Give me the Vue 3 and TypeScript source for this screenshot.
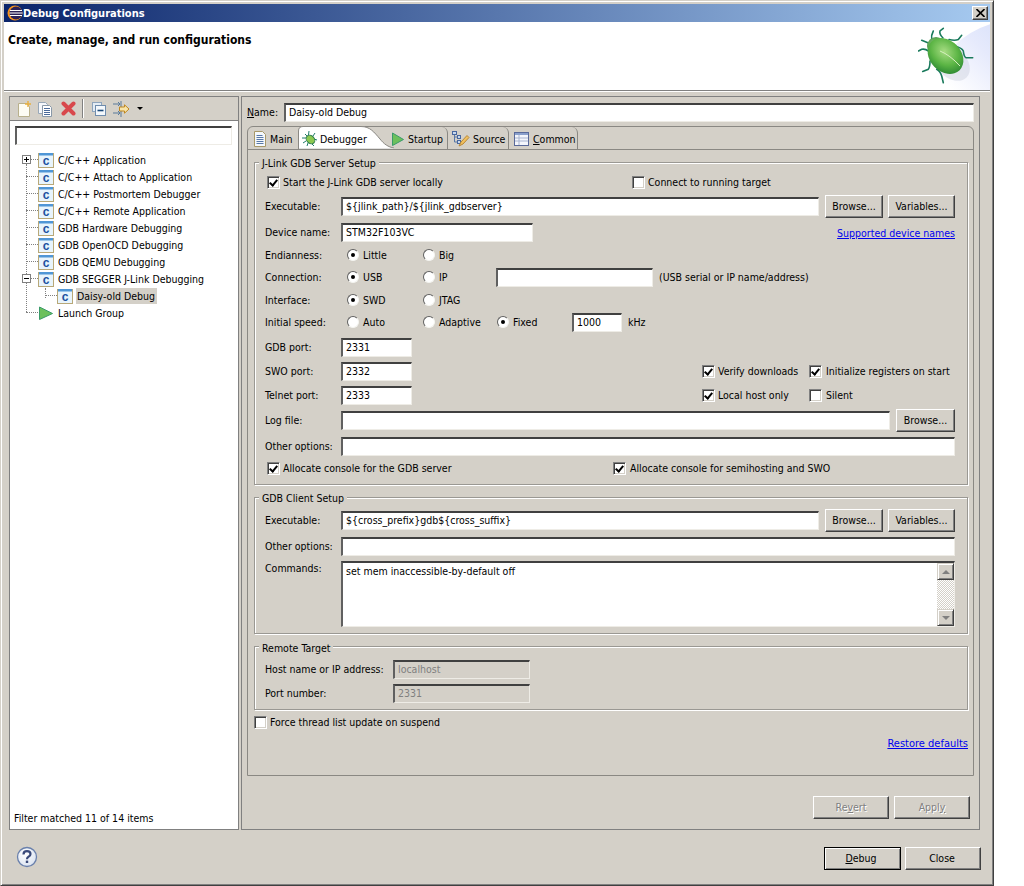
<script setup lang="ts">
interface TreeItem { label: string; child?: boolean; expander?: '+' | '-'; selected?: boolean; launch?: boolean }
const tree: TreeItem[] = [
  { label: 'C/C++ Application', expander: '+' },
  { label: 'C/C++ Attach to Application' },
  { label: 'C/C++ Postmortem Debugger' },
  { label: 'C/C++ Remote Application' },
  { label: 'GDB Hardware Debugging' },
  { label: 'GDB OpenOCD Debugging' },
  { label: 'GDB QEMU Debugging' },
  { label: 'GDB SEGGER J-Link Debugging', expander: '-' },
  { label: 'Daisy-old Debug', child: true, selected: true },
  { label: 'Launch Group', launch: true },
]
const legs = [
  'M13.7 16 Q13 11 15.3 7',
  'M25 14 Q21 10 22 7 L25.3 4.3',
  'M31 15.5 Q37 17 40.3 15.5 L43.7 11.3',
  'M10.5 19 L3.7 16.3',
  'M10.5 27 Q7 24.5 3.7 25.3 L0.5 27',
  'M12 37 Q12 43 10.3 45.3 L4.7 47.5',
  'M18.7 45.3 Q22 47 23.7 52 L25.3 58.7',
  'M37 22 Q44 24 45.3 27 Q46 33 48 33.7 L54.7 33.7',
]
</script>

<template>
  <div class="window">
    <div class="titlebar">
      <svg class="eclipse" width="16" height="16" viewBox="0 0 16 16">
        <circle cx="8" cy="8" r="7.5" fill="#f7941e" />
        <circle cx="9" cy="8" r="6.5" fill="#2c2255" />
        <path d="M3 5.5h12M2.5 8h13M3 10.5h12" stroke="#fff" stroke-width="1.2" />
      </svg>
      <span class="title-text">Debug Configurations</span>
      <button class="close-x" aria-label="Close">
        <svg width="9" height="8" viewBox="0 0 9 8"><path d="M0.5 0L8.5 8M8.5 0L0.5 8" stroke="#000" stroke-width="1.6" /></svg>
      </button>
    </div>

    <div class="header">
      <span class="header-title">Create, manage, and run configurations</span>
      <svg class="bug" width="72" height="66" viewBox="0 0 72 66">
        <defs>
          <linearGradient id="corner" x1="0" y1="1" x2="1" y2="0">
            <stop offset="0.2" stop-color="#ffffff" />
            <stop offset="0.75" stop-color="#e6eafc" />
            <stop offset="1" stop-color="#dde4fb" />
          </linearGradient>
          <radialGradient id="shell" cx="0.4" cy="0.42" r="0.7">
            <stop offset="0" stop-color="#a6dc82" />
            <stop offset="0.55" stop-color="#5cb545" />
            <stop offset="1" stop-color="#23802f" />
          </radialGradient>
          <radialGradient id="head" cx="0.4" cy="0.4" r="0.7">
            <stop offset="0" stop-color="#8ccb70" />
            <stop offset="1" stop-color="#2a7a3a" />
          </radialGradient>
        </defs>
        <path d="M72 0.3 Q28.7 13.7 8.7 66 H72 Z" fill="url(#corner)" />
        <ellipse cx="33" cy="38" rx="22" ry="15" fill="#c9cfdd" opacity="0.45" transform="rotate(45 33 38)" />
        <g fill="none" stroke="#1a7a5c" stroke-width="1.6" stroke-linecap="round">
          <path v-for="(d, i) in legs" :key="i" :d="d" />
        </g>
        <circle cx="18" cy="22" r="9" fill="url(#head)" />
        <ellipse cx="27.5" cy="32" rx="20" ry="15.5" fill="url(#shell)" transform="rotate(45 27.5 32)" />
        <path d="M22 27 Q32 31 42 42" fill="none" stroke="#d6f0c0" stroke-width="1" />
      </svg>
    </div>

    <div class="body">
      <aside class="left">
        <div class="toolbar">
          <svg width="16" height="16" viewBox="0 0 16 16" class="tb-new">
            <path d="M2.5 2.5h8l3 3v10h-11z" fill="#fdfcf4" stroke="#b8b08c" />
            <path d="M12 0v6M9 3h6" stroke="#e8b040" stroke-width="1.4" />
          </svg>
          <svg width="16" height="16" viewBox="0 0 16 16" class="tb-dup">
            <path d="M1.5 1.5h7l2 2v9h-9z" fill="#f4f6fa" stroke="#98a8b8" />
            <path d="M5.5 4.5h7l2 2v9h-9z" fill="#fff" stroke="#8898a8" />
            <path d="M7 7.5h6M7 9.5h6M7 11.5h6M7 13.5h6" stroke="#4a6a9a" />
          </svg>
          <svg width="15" height="15" viewBox="0 0 15 15" class="tb-del">
            <path d="M2.5 2.5L12.5 12.5M12.5 2.5L2.5 12.5" stroke="#d8484c" stroke-width="4" stroke-linecap="round" />
          </svg>
          <span class="tb-sep"></span>
          <svg width="14" height="14" viewBox="0 0 14 14" class="tb-collapse">
            <rect x="0.5" y="0.5" width="9" height="9" fill="#e4ecf4" stroke="#8ea4bc" />
            <rect x="3.5" y="3.5" width="10" height="10" fill="#f4f8fc" stroke="#6f8cac" />
            <path d="M5.5 8.5h6" stroke="#1c4a7a" stroke-width="1.6" />
          </svg>
          <svg width="17" height="16" viewBox="0 0 17 16" class="tb-filter">
            <path d="M0 3h6M0 12h6M8 0v16M5 1l2 2-2 2M5 10l2 2-2 2" fill="none" stroke="#5a7a9a" />
            <path d="M6.5 6h5V3.8l4.5 4.2-4.5 4.2V10h-5z" fill="#f8e4a8" stroke="#c08820" />
          </svg>
          <span class="tb-drop"></span>
        </div>
        <div class="filter-wrap"><div class="field filter-field"></div></div>
        <div class="tree">
          <span class="tree-vline"></span>
          <span class="tree-vline-child"></span>
          <div v-for="item in tree" :key="item.label" class="tree-row" :class="{ 'tree-child': item.child }">
            <span class="tree-slot">
              <span class="tree-dots"></span>
              <span v-if="item.expander" class="expander">
                <span class="exp-h"></span>
                <span v-if="item.expander === '+'" class="exp-v"></span>
              </span>
            </span>
            <svg v-if="item.launch" width="16" height="16" viewBox="0 0 16 16">
              <path d="M1.5 2L14.5 8.5L1.5 14.5Z" fill="#6cc05c" stroke="#3a9a6a" />
            </svg>
            <svg v-else width="16" height="16" viewBox="0 0 16 16">
              <rect x="0.5" y="1.5" width="15" height="14" fill="#e8f4fc" stroke="#b8a878" />
              <rect x="1" y="1" width="14" height="2.5" fill="#4f96d6" />
              <text x="8" y="12.8" class="c-glyph">c</text>
            </svg>
            <span class="tree-label" :class="{ selected: item.selected }">{{ item.label }}</span>
          </div>
        </div>
        <div class="filter-status">Filter matched 11 of 14 items</div>
      </aside>

      <main class="right">
        <div class="name-row">
          <span class="name-label"><u>N</u>ame:</span>
          <div class="field name-field">Daisy-old Debug</div>
        </div>

        <section class="folder">
          <div class="tabs">
            <div class="tab tab-main">
              <svg width="14" height="16" viewBox="0 0 14 16">
                <path d="M1.5 0.5h8l3 3v12h-11z" fill="#f4f8fc" stroke="#a89868" />
                <path d="M3.5 4.5h6M3.5 6.5h7M3.5 8.5h7M3.5 10.5h7M3.5 12.5h7" stroke="#5878a8" />
              </svg>
              <span>Main</span>
            </div>
            <div class="tab tab-debugger">
              <svg class="tab-shape" width="96" height="23" viewBox="0 0 96 23">
                <path d="M0.5 23V5Q0.5 0.5 5 0.5H63C72 0.5 76 6 82 13C86 18 90 21 96 22V23Z" fill="#fff" stroke="#8a8883" />
                <path d="M1 23H96" stroke="#fff" />
              </svg>
              <svg class="tab-icon" width="16" height="16" viewBox="0 0 16 16">
                <g stroke="#1f7a6a" stroke-width="1" fill="none">
                  <path d="M3 3L5 5M7 0L6.5 4M13 2L11 5M0 7L4 7M15 9L12 8M1 12L4 10M5 15L6 12M12 15L10 13" />
                </g>
                <ellipse cx="8.5" cy="8.5" rx="4.8" ry="3.8" fill="#8cc850" stroke="#2a7a4a" transform="rotate(45 8.5 8.5)" />
              </svg>
              <span class="tab-text">Debugger</span>
            </div>
            <div class="tab tab-startup">
              <svg class="startup-icon" width="14" height="16" viewBox="0 0 14 16">
                <path d="M1.5 2L12.5 8.5L1.5 14.5Z" fill="#6cc05c" stroke="#3a9a6a" />
              </svg>
              <span>Startup</span>
            </div>
            <div class="tab tab-source">
              <svg width="18" height="16" viewBox="0 0 18 16">
                <path d="M2.5 2v9h3M2.5 6h3" fill="none" stroke="#5878a8" />
                <rect x="0.5" y="0.5" width="4" height="3" fill="#c8d8ec" stroke="#4868a0" />
                <rect x="5.5" y="4.5" width="3" height="3" fill="#c8d8ec" stroke="#4868a0" />
                <rect x="5.5" y="9.5" width="3" height="3" fill="#c8d8ec" stroke="#4868a0" />
                <path d="M7 15L9 11L15 4.5L17 6.5L11 13Z" fill="#f0c060" stroke="#b88838" />
              </svg>
              <span>Source</span>
            </div>
            <div class="tab tab-common">
              <svg width="15" height="14" viewBox="0 0 15 14">
                <rect x="0.5" y="0.5" width="14" height="13" fill="#f4f6fc" stroke="#5a6a9a" />
                <rect x="1" y="1" width="13" height="2" fill="#8aa0cc" />
                <path d="M5 3v10M1 6h13M1 9h13" stroke="#a8b4d0" />
              </svg>
              <span><u>C</u>ommon</span>
            </div>
          </div>

          <div class="folder-body">
            <div class="group group-jlink">
              <span class="group-title">J-Link GDB Server Setup</span>
              <div class="row">
                <span class="cb-cell"><span class="check on"></span>Start the J-Link GDB server locally</span>
                <span class="cb-connect"><span class="check"></span>Connect to running target</span>
              </div>
              <div class="row mt4">
                <span class="lbl">Executable:</span>
                <div class="field f-exe">${jlink_path}/${jlink_gdbserver}</div>
                <button class="btn btn-browse">Browse...</button>
                <button class="btn btn-vars">Variables...</button>
              </div>
              <div class="row mt6">
                <span class="lbl">Device name:</span>
                <div class="field f-device">STM32F103VC</div>
                <a class="link link-device">Supported device names</a>
              </div>
              <div class="row mt3">
                <span class="lbl">Endianness:</span>
                <span class="opt opt1"><span class="radio on"></span>Little</span>
                <span class="opt opt2"><span class="radio"></span>Big</span>
              </div>
              <div class="row mt2">
                <span class="lbl">Connection:</span>
                <span class="opt opt1"><span class="radio on"></span>USB</span>
                <span class="opt opt2"><span class="radio"></span>IP</span>
                <div class="field f-ip"></div>
                <span class="hint">(USB serial or IP name/address)</span>
              </div>
              <div class="row mt3">
                <span class="lbl">Interface:</span>
                <span class="opt opt1"><span class="radio on"></span>SWD</span>
                <span class="opt opt2"><span class="radio"></span>JTAG</span>
              </div>
              <div class="row mt2">
                <span class="lbl">Initial speed:</span>
                <span class="opt opt1"><span class="radio"></span>Auto</span>
                <span class="opt opt2"><span class="radio"></span>Adaptive</span>
                <span class="opt opt3"><span class="radio on"></span>Fixed</span>
                <div class="field f-speed">1000</div>
                <span class="hint">kHz</span>
              </div>
              <div class="row mt5">
                <span class="lbl">GDB port:</span>
                <div class="field f-port">2331</div>
              </div>
              <div class="row mt4">
                <span class="lbl">SWO port:</span>
                <div class="field f-port">2332</div>
                <span class="cb-a"><span class="check on"></span>Verify downloads</span>
                <span class="cb-b"><span class="check on"></span>Initialize registers on start</span>
              </div>
              <div class="row mt4">
                <span class="lbl">Telnet port:</span>
                <div class="field f-port">2333</div>
                <span class="cb-a"><span class="check on"></span>Local host only</span>
                <span class="cb-b"><span class="check"></span>Silent</span>
              </div>
              <div class="row mt5">
                <span class="lbl">Log file:</span>
                <div class="field f-log"></div>
                <button class="btn btn-browse2">Browse...</button>
              </div>
              <div class="row mt6">
                <span class="lbl">Other options:</span>
                <div class="field f-grow"></div>
              </div>
              <div class="row mt2">
                <span class="cb-cell"><span class="check on"></span>Allocate console for the GDB server</span>
                <span class="cb-semi"><span class="check on"></span>Allocate console for semihosting and SWO</span>
              </div>
            </div>

            <div class="group group-client">
              <span class="group-title">GDB Client Setup</span>
              <div class="row">
                <span class="lbl">Executable:</span>
                <div class="field f-exe">${cross_prefix}gdb${cross_suffix}</div>
                <button class="btn btn-browse">Browse...</button>
                <button class="btn btn-vars">Variables...</button>
              </div>
              <div class="row mt6">
                <span class="lbl">Other options:</span>
                <div class="field f-grow"></div>
              </div>
              <div class="cmd-row">
                <span class="lbl cmd-lbl">Commands:</span>
                <div class="field cmd-area">
                  <span class="cmd-text">set mem inaccessible-by-default off</span>
                  <div class="scrollbar">
                    <span class="sb-btn"><span class="arrow-up"></span></span>
                    <span class="sb-track"></span>
                    <span class="sb-btn"><span class="arrow-down"></span></span>
                  </div>
                </div>
              </div>
            </div>

            <div class="group group-remote">
              <span class="group-title">Remote Target</span>
              <div class="row">
                <span class="lbl lbl-wide">Host name or IP address:</span>
                <div class="field f-disabled">localhost</div>
              </div>
              <div class="row mt4">
                <span class="lbl lbl-wide">Port number:</span>
                <div class="field f-disabled">2331</div>
              </div>
            </div>

            <div class="force-row"><span class="check"></span>Force thread list update on suspend</div>
            <div class="restore-row"><a class="link">Restore defaults</a></div>
          </div>
        </section>

        <div class="apply-row">
          <button class="btn btn-action" disabled>Re<u>v</u>ert</button>
          <button class="btn btn-action" disabled>Appl<u>y</u></button>
        </div>
      </main>
    </div>

    <footer class="footer">
      <svg class="help" width="22" height="22" viewBox="0 0 22 22">
        <defs>
          <radialGradient id="help-bg" cx="0.4" cy="0.35" r="0.8">
            <stop offset="0" stop-color="#ffffff" />
            <stop offset="1" stop-color="#d4deee" />
          </radialGradient>
        </defs>
        <circle cx="11" cy="11" r="9.5" fill="url(#help-bg)" stroke="#6a80ac" stroke-width="1.3" />
        <path d="M7.5 8.5Q7.5 5.2 11 5.2Q14.5 5.2 14.5 8Q14.5 9.8 12.5 10.8Q11 11.6 11 13.2" fill="none" stroke="#3a4a7a" stroke-width="2.2" />
        <rect x="9.8" y="14.6" width="2.4" height="2.4" fill="#3a4a7a" />
      </svg>
      <span class="footer-space"></span>
      <button class="btn btn-default"><u>D</u>ebug</button>
      <button class="btn btn-close">Close</button>
    </footer>
  </div>
</template>

<style>
html, body { margin: 0; padding: 0; background: #fff; }
</style>

<style scoped>
.window {
  box-sizing: border-box;
  width: 994px;
  height: 886px;
  padding: 3px;
  display: flex;
  flex-direction: column;
  background: #d4d0c8;
  border: 1px solid;
  border-color: #d4d0c8 #404040 #404040 #d4d0c8;
  box-shadow: inset 1px 1px 0 #fff, inset -1px -1px 0 #808080;
  font-family: "DejaVu Sans Condensed", "DejaVu Sans", Tahoma, sans-serif;
  font-stretch: condensed;
  font-size: 10.5px;
  color: #000;
  line-height: 14px;
}
.titlebar {
  height: 18px;
  flex: none;
  display: flex;
  align-items: center;
  background: linear-gradient(90deg, #0a246a, #a6caf0);
  padding-left: 3px;
  padding-right: 2px;
}
.eclipse { flex: none; margin-right: 1px; }
.title-text { color: #fff; font-weight: bold; font-size: 11px; flex: 1; padding-top: 2px; margin-left: -1px; }
.close-x {
  box-sizing: border-box;
  width: 16px;
  height: 14px;
  padding: 0;
  display: flex;
  align-items: center;
  justify-content: center;
  background: #d4d0c8;
  border: 1px solid;
  border-color: #fff #404040 #404040 #fff;
  box-shadow: inset -1px -1px 0 #808080;
}
.header {
  box-sizing: border-box;
  flex: none;
  height: 69px;
  position: relative;
  background: #fff;
  border-bottom: 1px solid #808080;
  box-shadow: 0 1px 0 #fff;
  padding: 11px 0 0 4px;
  display: flex;
  justify-content: space-between;
}
.header-title { font-weight: bold; font-size: 12px; }
.bug { position: absolute; right: 0; bottom: 0; }
.body {
  flex: none;
  height: 734px;
  margin-top: 5px;
  padding-left: 5px;
  display: flex;
  gap: 2px;
}
.left {
  box-sizing: border-box;
  width: 230px;
  display: flex;
  flex-direction: column;
  background: #fff;
  border: 1px solid #808080;
}
.toolbar {
  box-sizing: content-box;
  height: 23px;
  flex: none;
  background: #d4d0c8;
  border-bottom: 1px solid #808080;
  display: flex;
  align-items: center;
  padding-left: 6px;
}
.tb-dup { margin-left: 5px; }
.tb-del { margin-left: 8px; }
.tb-sep { width: 1px; height: 19px; background: #808080; box-shadow: 1px 0 0 #fff; margin-left: 6px; }
.tb-collapse { margin-left: 9px; }
.tb-filter { margin-left: 7px; }
.tb-drop {
  margin-left: 7px;
  width: 0;
  height: 0;
  border-left: 3px solid transparent;
  border-right: 3px solid transparent;
  border-top: 3px solid #000;
}
.filter-wrap { padding: 5px 6px 0 5px; flex: none; }
.filter-field { height: 19px; }
.tree { position: relative; flex: 1; padding: 6px 0 0 12px; }
.tree-vline {
  position: absolute;
  left: 16px;
  top: 19px;
  height: 148px;
  border-left: 1px dotted #808080;
}
.tree-vline-child {
  position: absolute;
  left: 35px;
  top: 143px;
  height: 10px;
  border-left: 1px dotted #808080;
}
.tree-row { display: flex; align-items: center; height: 17px; }
.tree-child { padding-left: 19px; }
.tree-slot { position: relative; width: 16px; height: 17px; flex: none; }
.tree-dots {
  position: absolute;
  left: 4px;
  right: 0;
  top: 8px;
  border-top: 1px dotted #808080;
}
.expander {
  position: absolute;
  left: 0;
  top: 4px;
  box-sizing: border-box;
  width: 9px;
  height: 9px;
  background: #fff;
  border: 1px solid #808080;
}
.exp-h { position: absolute; left: 1px; top: 3px; width: 5px; height: 1px; background: #000; }
.exp-v { position: absolute; left: 3px; top: 1px; width: 1px; height: 5px; background: #000; }
.c-glyph { font-family: "Liberation Sans", sans-serif; font-weight: bold; font-size: 12px; fill: #2050a0; text-anchor: middle; }
.tree-label { margin-left: 3px; padding: 0 1px; line-height: 16px; white-space: nowrap; }
.tree-label.selected { background: #d4d0c8; padding: 0 2px 0 1px; }
.filter-status { flex: none; padding: 0 0 0 4px; height: 18px; box-sizing: border-box; }
.right {
  box-sizing: border-box;
  width: 739px;
  border: 1px solid #808080;
  padding: 6px 5px 0 5px;
  display: flex;
  flex-direction: column;
}
.name-row { display: flex; align-items: center; height: 18px; flex: none; }
.name-label { width: 37px; flex: none; }
.name-field { flex: 1; height: 18px; line-height: 14px; }
.field {
  box-sizing: border-box;
  height: 19px;
  background: #fff;
  border-top: 2px solid #404040;
  border-left: 2px solid #606060;
  border-right: 1px solid #eeece6;
  border-bottom: 1px solid #eeece6;
  padding-left: 3px;
  line-height: 15px;
  white-space: nowrap;
  overflow: hidden;
}
.folder {
  box-sizing: border-box;
  flex: none;
  height: 650px;
  margin-top: 5px;
  border: 1px solid #8a8883;
  border-radius: 6px 6px 0 0;
  display: flex;
  flex-direction: column;
}
.tabs {
  flex: none;
  height: 23px;
  box-sizing: border-box;
  border-bottom: 1px solid #8a8883;
  display: flex;
}
.tab {
  box-sizing: border-box;
  height: 22px;
  display: flex;
  align-items: center;
  gap: 3px;
  white-space: nowrap;
  flex: none;
  border-right: 1px solid #8a8883;
  border-top-right-radius: 6px;
  padding-top: 1px;
}
.tab-main { width: 50px; padding-left: 5px; border-right: none; }
.tab-debugger {
  position: relative;
  width: 95px;
  padding-left: 4px;
  border-right: none;
  gap: 0;
}
.tab-shape { position: absolute; left: 0; top: -1px; }
.tab-icon, .tab-text { position: relative; }
.tab-text { margin-left: 2px; }
.tab-startup { width: 55px; padding-left: 0; }
.startup-icon { margin-left: -2px; position: relative; }
.tab-source { width: 61px; padding-left: 4px; }
.tab-common { width: 69px; padding-left: 5px; gap: 4px; }
.folder-body {
  flex: 1;
  padding: 12px 5px 0 6px;
}
.group {
  position: relative;
  box-sizing: border-box;
  width: 714px;
  border: 1px solid #9a9893;
  box-shadow: 1px 1px 0 #fff, inset 1px 1px 0 #fff;
  padding-left: 10px;
  padding-right: 12px;
}
.group-title {
  position: absolute;
  left: 4px;
  top: -7px;
  padding: 0 3px;
  background: #d4d0c8;
  white-space: nowrap;
}
.group-jlink { height: 323px; padding-top: 9px; }
.group-client { height: 137px; margin-top: 12px; padding-top: 12px; }
.group-remote { height: 64px; margin-top: 12px; padding-top: 12px; }
.group-remote .group-title { top: -6px; }
.row { display: flex; align-items: center; height: 20px; white-space: nowrap; }
.mt2 { margin-top: 2px; }
.mt3 { margin-top: 3px; }
.mt4 { margin-top: 4px; }
.mt5 { margin-top: 5px; }
.mt6 { margin-top: 6px; }
.lbl { width: 76px; flex: none; }
.lbl-wide { width: 128px; }
.check {
  position: relative;
  box-sizing: border-box;
  display: inline-block;
  flex: none;
  width: 13px;
  height: 13px;
  background: #fff;
  border: 1px solid;
  border-color: #808080 #fff #fff #808080;
  box-shadow: inset 1px 1px 0 #404040, inset -1px -1px 0 #d4d0c8;
}
.check.on::after {
  content: "";
  position: absolute;
  left: 2px;
  top: 1px;
  width: 3px;
  height: 6px;
  border: solid #000;
  border-width: 0 2px 2px 0;
  transform: translateX(1px) rotate(40deg);
}
.radio {
  position: relative;
  box-sizing: border-box;
  display: inline-block;
  flex: none;
  width: 12px;
  height: 12px;
  background: #fff;
  border-radius: 50%;
  border: 1px solid;
  border-color: #606060 #f4f4f0 #f4f4f0 #606060;
}
.radio.on::after {
  content: "";
  position: absolute;
  left: 3px;
  top: 3px;
  width: 4px;
  height: 4px;
  border-radius: 50%;
  background: #000;
}
.cb-cell, .cb-connect, .cb-semi, .cb-a, .cb-b, .opt, .force-row { display: flex; align-items: center; }
.cb-cell { width: 347px; padding-left: 2px; box-sizing: border-box; gap: 3px; }
.cb-connect { margin-left: 20px; gap: 3px; }
.cb-semi { gap: 4px; margin-left: 1px; }
.cb-a { width: 107px; flex: none; gap: 3px; box-sizing: border-box; }
.cb-b { gap: 4px; flex: none; }
.f-port + .cb-a { margin-left: 290px; }
.opt { box-sizing: border-box; gap: 4px; flex: none; padding-left: 6px; }
.opt1 { width: 76px; }
.opt2 { width: 74px; }
.opt3 { width: 81px; }
.f-ip { width: 157px; margin-left: 5px; }
.hint { margin-left: 6px; }
.f-speed { width: 50px; }
.f-exe { width: 478px; }
.f-device { width: 192px; }
.f-port { width: 71px; }
.f-log { width: 549px; }
.f-grow { flex: 1; }
.f-disabled { width: 137px; background: #d4d0c8; color: #808080; }
.btn {
  box-sizing: border-box;
  height: 23px;
  flex: none;
  padding: 0 0 2px;
  background: #d4d0c8;
  border: 1px solid;
  border-color: #fff #404040 #404040 #fff;
  box-shadow: inset -1px -1px 0 #808080;
  font: inherit;
  color: #000;
  text-align: center;
}
.row .btn { padding: 0; }
.btn:disabled { color: #808080; text-shadow: 1px 1px 0 #fff; }
.btn-browse { width: 58px; margin-left: 6px; }
.btn-vars { width: 67px; margin-left: 5px; }
.btn-browse2 { width: 59px; margin-left: 6px; }
.link { color: #0000ee; text-decoration: underline; }
.link-device { margin-left: auto; padding-top: 2px; }
.cmd-row { display: flex; margin-top: 5px; }
.cmd-lbl { padding-top: 0; }
.cmd-area {
  position: relative;
  flex: 1;
  height: 66px;
  padding-top: 1px;
  display: flex;
  justify-content: space-between;
}
.cmd-text { display: block; }
.scrollbar {
  width: 17px;
  height: 63px;
  margin-top: -1px;
  flex: none;
  display: flex;
  flex-direction: column;
  background: repeating-conic-gradient(#d4d0c8 0 25%, #fff 0 50%) 0 0 / 2px 2px;
}
.sb-btn {
  box-sizing: border-box;
  height: 17px;
  flex: none;
  display: flex;
  align-items: center;
  justify-content: center;
  background: #d4d0c8;
  border: 1px solid;
  border-color: #d4d0c8 #404040 #404040 #d4d0c8;
  box-shadow: inset 1px 1px 0 #fff, inset -1px -1px 0 #808080;
}
.sb-track { flex: 1; }
.arrow-up { width: 0; height: 0; border: 4px solid transparent; border-top: none; border-bottom: 4px solid #808080; }
.arrow-down { width: 0; height: 0; border: 4px solid transparent; border-bottom: none; border-top: 4px solid #808080; }
.force-row { box-sizing: border-box; height: 16px; margin-top: 4px; gap: 3px; }
.restore-row { height: 16px; margin-top: 7px; width: 714px; text-align: right; font-size: 11px; }
.apply-row {
  display: flex;
  justify-content: flex-end;
  gap: 5px;
  margin-top: 20px;
  padding-right: 4px;
}
.btn-action { width: 76px; }
.footer {
  flex: 1;
  display: flex;
  align-items: flex-start;
  padding: 16px 9px 0 12px;
}
.footer-space { flex: 1; }
.btn-default { width: 77px; margin-top: 1px; padding-right: 3px; border: 1px solid #000; border-color: #000; box-shadow: inset 1px 1px 0 #fff, inset -1px -1px 0 #808080; outline: none; }
.btn-close { width: 76px; margin-left: 4px; margin-top: 1px; padding-right: 2px; }
</style>
